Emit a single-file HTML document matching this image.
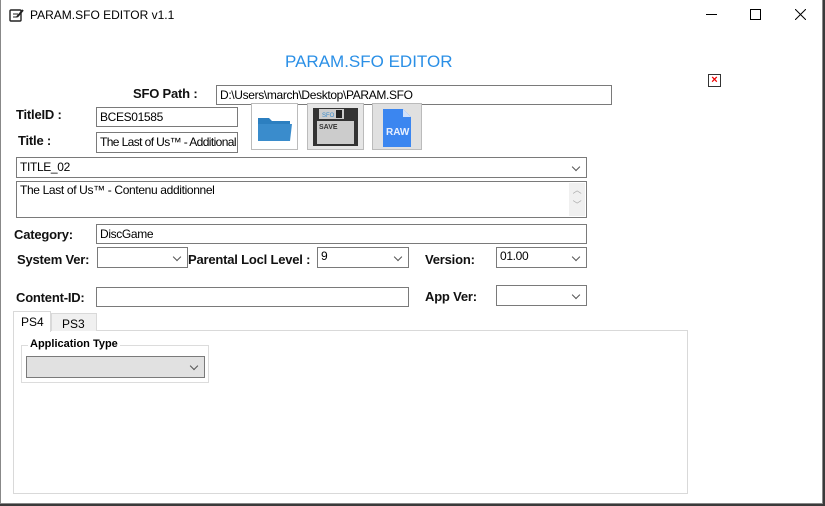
<!DOCTYPE html><html><head><style>
body{margin:0;width:825px;height:506px;background:#3a3a3a;font-family:"Liberation Sans",sans-serif;overflow:hidden;position:relative}
.win{position:absolute;left:0;top:0;width:823px;height:504px;background:#fff;box-shadow:inset 1px 0 0 #888,inset -1px 0 0 #888,inset 0 -1px 0 #888}
.a{position:absolute;white-space:nowrap}
.lb{font-weight:bold;font-size:13px;color:#111;letter-spacing:-0.2px}
.tb{position:absolute;border:1px solid #7a7a7a;background:#fff;font-size:12px;letter-spacing:-0.35px;line-height:18px;padding-left:3px;box-sizing:border-box;color:#000;overflow:hidden;white-space:nowrap}
.cb::after{content:"";position:absolute;right:7px;top:6px;width:5px;height:5px;border-right:1px solid #555;border-bottom:1px solid #555;transform:rotate(45deg)}
</style></head><body><div class="win">
<svg class="a" style="left:9px;top:8px" width="15" height="15" viewBox="0 0 15 15"><rect x="1" y="2" width="11" height="11" rx="1" fill="#fff" stroke="#222" stroke-width="1.4"/><path d="M4 6h5M4 9h4" stroke="#222"/><path d="M8 9l6-7" stroke="#222" stroke-width="2"/></svg>
<div class="a" style="left:30px;top:8px;font-size:12px">PARAM.SFO EDITOR v1.1</div>
<div class="a" style="left:706px;top:14px;width:11px;height:1px;background:#000"></div>
<div class="a" style="left:750px;top:9px;width:9px;height:9px;border:1px solid #000"></div>
<svg class="a" style="left:795px;top:9px" width="11" height="11"><path d="M0 0L11 11M11 0L0 11" stroke="#000"/></svg>
<div class="a" style="left:285px;top:52px;font-size:17px;color:#2a8fe6">PARAM.SFO EDITOR</div>
<div class="a" style="left:708px;top:74px;width:13px;height:13px;border:1px solid #333;box-sizing:border-box;color:#e00;font-size:11px;font-weight:bold;text-align:center;line-height:11px">×</div>
<div class="a lb" style="left:133px;top:86px">SFO Path :</div>
<div class="tb" style="left:216px;top:85px;width:396px;height:20px">D:\Users\march\Desktop\PARAM.SFO</div>
<div class="a lb" style="left:16px;top:107px">TitleID :</div>
<div class="tb" style="left:96px;top:107px;width:142px;height:20px">BCES01585</div>
<div class="a lb" style="left:18px;top:133px">Title :</div>
<div class="tb" style="left:96px;top:132px;width:142px;height:21px;letter-spacing:-0.6px">The Last of Us™ - Additional</div>
<div class="a" style="left:251px;top:103px;width:47px;height:47px;border:1px solid #bbb;box-sizing:border-box;background:#fff">
<svg width="45" height="45"><path d="M6 14h11l3 3h18v20H6z" fill="#2c7fc0"/><path d="M6 20h34l-2 17H6z" fill="#3a8ccc"/></svg></div>
<div class="a" style="left:307px;top:103px;width:57px;height:47px;border:1px solid #bbb;box-sizing:border-box;background:#e6e6e6">
<svg width="55" height="45"><rect x="5" y="4" width="45" height="38" fill="#333"/><rect x="11" y="5" width="25" height="10" fill="#ccc"/><text x="14" y="13" font-size="6" fill="#3a8ccc" font-family="Liberation Sans">SFO</text><rect x="28" y="6" width="6" height="8" fill="#222"/><rect x="9" y="17" width="37" height="23" fill="#ccc"/><text x="11" y="25" font-size="7" font-weight="bold" fill="#333" font-family="Liberation Sans">SAVE</text></svg></div>
<div class="a" style="left:372px;top:103px;width:50px;height:47px;border:1px solid #bbb;box-sizing:border-box;background:#e0e0e0">
<svg width="48" height="45"><path d="M10 5h20l8 8v30H10z" fill="#3b86f0"/><path d="M30 5l8 8h-8z" fill="#cfe0fb"/><text x="13" y="31" font-size="10" font-weight="bold" fill="#e8f0ff" font-family="Liberation Sans">RAW</text></svg></div>
<div class="tb cb" style="left:16px;top:157px;width:571px;height:21px">TITLE_02</div>
<div class="tb" style="left:16px;top:181px;width:571px;height:37px;line-height:16px">The Last of Us™ - Contenu additionnel
<div class="a" style="right:1px;top:1px;width:16px;height:33px;background:#f0f0f0;color:#aaa;font-size:9px;text-align:center;line-height:15px">︿<br>﹀</div></div>
<div class="a lb" style="left:14px;top:227px">Category:</div>
<div class="tb" style="left:96px;top:224px;width:491px;height:20px">DiscGame</div>
<div class="a lb" style="left:17px;top:252px">System Ver:</div>
<div class="tb cb" style="left:97px;top:247px;width:91px;height:21px"></div>
<div class="a lb" style="left:188px;top:252px">Parental Locl Level :</div>
<div class="tb cb" style="left:317px;top:247px;width:92px;height:21px;line-height:16px">9</div>
<div class="a lb" style="left:425px;top:252px">Version:</div>
<div class="tb cb" style="left:496px;top:247px;width:91px;height:21px;line-height:16px">01.00</div>
<div class="a lb" style="left:16px;top:290px">Content-ID:</div>
<div class="tb" style="left:96px;top:287px;width:313px;height:20px"></div>
<div class="a lb" style="left:425px;top:289px">App Ver:</div>
<div class="tb cb" style="left:496px;top:285px;width:91px;height:21px"></div>
<div class="a" style="left:13px;top:330px;width:675px;height:164px;border:1px solid #d9d9d9;box-sizing:border-box"></div>
<div class="a" style="left:51px;top:313px;width:46px;height:18px;border:1px solid #d9d9d9;border-bottom:none;background:#f0f0f0;font-size:12px;box-sizing:border-box;padding:3px 0 0 10px">PS3</div>
<div class="a" style="left:13px;top:311px;width:38px;height:21px;border:1px solid #d9d9d9;border-bottom:none;background:#fff;font-size:12px;box-sizing:border-box;padding:3px 0 0 7px">PS4</div>
<div class="a" style="left:21px;top:345px;width:188px;height:38px;border:1px solid #dcdcdc;box-sizing:border-box"></div>
<div class="a" style="left:28px;top:338px;background:#fff;padding:0 2px;font-size:11px;font-weight:bold">Application Type</div>
<div class="tb cb" style="left:26px;top:356px;width:179px;height:22px;background:#e1e1e1"></div>
</div></body></html>
